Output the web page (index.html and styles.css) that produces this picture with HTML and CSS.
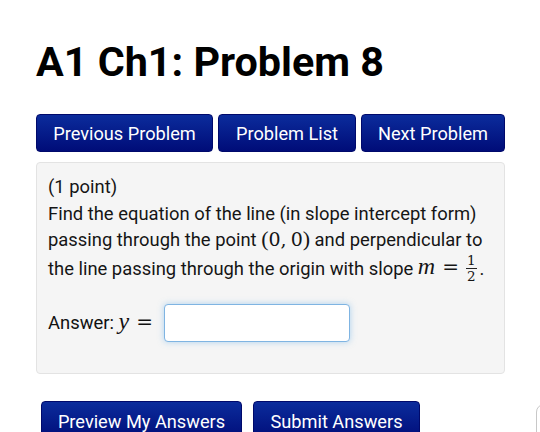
FILE: index.html
```html
<!DOCTYPE html>
<html>
<head>
<meta charset="utf-8">
<link rel="stylesheet" href="styles.css">
</head>
<body>
<h1 class="title">A1 Ch1: Problem 8</h1>
<div class="nav">
  <button class="btn btn-prev">Previous Problem</button>
  <button class="btn btn-list">Problem List</button>
  <button class="btn btn-next">Next Problem</button>
</div>
<div class="well">
  <p class="problem">(1 point)<br>Find the equation of the line (in slope intercept form) passing through the point <span class="math"><span class="paren">(</span>0<span class="comma">,</span>0<span class="paren">)</span></span> and perpendicular to the line passing through the origin with slope <span class="math"><i class="mi">m</i><span class="eq">=</span><span class="frac"><span class="num">1</span><span class="den">2</span></span></span>.</p>
  <div class="answer">
    <span class="label">Answer: <span class="math"><i class="mi">y</i><span class="eq">=</span></span></span>
    <input class="field" type="text">
  </div>
</div>
<div class="submit">
  <button class="btn btn-preview">Preview My Answers</button>
  <button class="btn btn-submit">Submit Answers</button>
</div>
<div class="edge"></div>
</body>
</html>
```
FILE: styles.css
```css
html, body {
  margin: 0;
  padding: 0;
  background: #fff;
  overflow: hidden;
}
body {
  font-family: Roboto, "Liberation Sans", sans-serif;
  color: #111;
  padding: 0 35px 0 36px;
  height: 432px;
  box-sizing: border-box;
  position: relative;
}
.title {
  font-family: Roboto, sans-serif;
  font-weight: 700;
  font-size: 41.3px;
  line-height: 50px;
  margin: 0;
  padding-top: 37px;
  color: #000;
}
.nav {
  display: flex;
  gap: 5px;
  margin-top: 27px;
}
.btn {
  font-family: Roboto, sans-serif;
  font-size: 18.2px;
  color: #fff;
  background: linear-gradient(#0b2c9c, #000c78);
  border: 1px solid #00096b;
  border-radius: 4px;
  height: 38px;
  padding: 0;
  box-sizing: border-box;
}
.btn-prev { width: 177px; }
.btn-list { width: 138px; }
.btn-next { width: 144px; }
.well {
  margin-top: 10px;
  background: #f5f5f5;
  border: 1px solid #e3e3e3;
  border-radius: 4px;
  padding: 11px 11px 31px 11px;
  height: 212px;
  box-sizing: border-box;
}
.problem {
  margin: 0;
  font-size: 18.4px;
  line-height: 26.5px;
  color: #151515;
}
.math {
  font-family: "DejaVu Serif", "Liberation Serif", serif;
  font-size: 19px;
  line-height: 0;
}
.paren {
  font-family: "Liberation Serif", serif;
  font-size: 22px;
}
.comma { margin-right: 4px; }
.mi {
  font-family: "Liberation Serif", serif;
  font-style: italic;
  font-size: 24px;
}
.eq {
  margin: 0 7px;
  font-size: 20px;
}
.frac {
  display: inline-block;
  vertical-align: -7px;
  font-size: 13.5px;
  line-height: 13.5px;
  text-align: center;
  margin-right: 3px;
}
.num {
  display: block;
  border-bottom: 1px solid #222;
  padding: 0 1px 1px;
}
.den {
  display: block;
  padding-top: 1px;
}
.answer {
  display: flex;
  align-items: center;
  margin-top: 20px;
  font-size: 18.4px;
}
.label { margin-right: 11px; }
.label .eq { margin-right: 0; }
.field {
  width: 186px;
  height: 38px;
  box-sizing: border-box;
  border: 1px solid #7fb4e2;
  border-radius: 4px;
  background: #fff;
  box-shadow: 0 0 6px rgba(102, 175, 233, 0.5);
}
.submit {
  display: flex;
  gap: 11px;
  margin-top: 27px;
  padding-left: 5px;
}
.btn-preview { width: 201px; height: 40px; }
.btn-submit { width: 167px; height: 40px; }
.edge {
  position: absolute;
  right: -8px;
  top: 404px;
  width: 10px;
  height: 40px;
  border: 1px solid #c8c8c8;
  border-radius: 8px 0 0 0;
  background: #fff;
}
```
